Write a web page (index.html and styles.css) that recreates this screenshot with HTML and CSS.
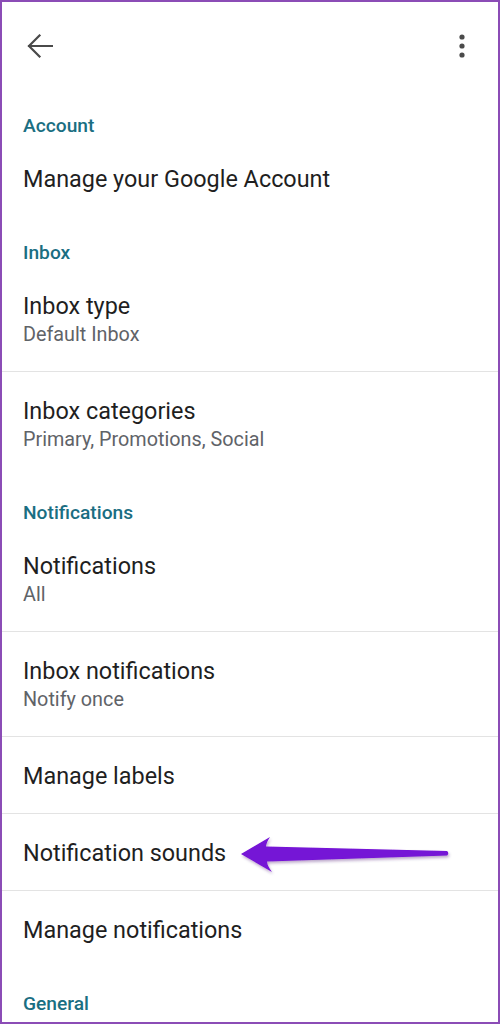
FILE: index.html
```html
<!DOCTYPE html>
<html>
<head>
<meta charset="utf-8">
<link rel="stylesheet" href="styles.css">
</head>
<body>
<div class="frame">
  <div class="topbar">
    <svg class="back" width="26" height="24" viewBox="0 0 26 24"><path d="M2 12H25M12.5 1.5L2 12L12.5 22.5" fill="none" stroke="#4a4a4a" stroke-width="2.2" stroke-linecap="square"/></svg>
    <svg class="more" width="6" height="24" viewBox="0 0 6 24"><circle cx="3" cy="3" r="2.6" fill="#4a4a4a"/><circle cx="3" cy="12" r="2.6" fill="#4a4a4a"/><circle cx="3" cy="21" r="2.6" fill="#4a4a4a"/></svg>
  </div>
  <div class="section">
    <div class="header">Account</div>
    <div class="item"><div class="title">Manage your Google Account</div></div>
  </div>
  <div class="section">
    <div class="header">Inbox</div>
    <div class="item"><div class="title">Inbox type</div><div class="sub">Default Inbox</div></div>
    <div class="item"><div class="title">Inbox categories</div><div class="sub">Primary, Promotions, Social</div></div>
  </div>
  <div class="section">
    <div class="header">Notifications</div>
    <div class="item"><div class="title">Notifications</div><div class="sub">All</div></div>
    <div class="item"><div class="title">Inbox notifications</div><div class="sub">Notify once</div></div>
    <div class="item"><div class="title">Manage labels</div></div>
    <div class="item"><div class="title">Notification sounds</div></div>
    <div class="item"><div class="title">Manage notifications</div></div>
  </div>
  <div class="section">
    <div class="header">General</div>
  </div>
  <svg class="pointer" width="230" height="50" viewBox="0 0 230 50">
    <defs><filter id="sh" x="-10%" y="-30%" width="120%" height="160%"><feDropShadow dx="1" dy="2" stdDeviation="1.6" flood-color="#3a0a66" flood-opacity="0.35"/></filter></defs>
    <path filter="url(#sh)" fill="#7512d6" d="M10 26 L39 9 Q35 15 35 18.5 L216 23 Q218.5 25.2 216 27.5 L36 33.5 Q36 37.5 41 44 Z"/>
  </svg>
</div>
</body>
</html>
```
FILE: styles.css
```css
html, body {
  margin: 0;
  padding: 0;
  background: #ffffff;
}
.frame {
  position: relative;
  width: 500px;
  height: 1024px;
  box-sizing: border-box;
  border: 2px solid #8b4cb6;
  overflow: hidden;
  background: #ffffff;
  font-family: Roboto, "Noto Sans", sans-serif;
}
.topbar {
  height: 87px;
  display: flex;
  align-items: center;
  justify-content: space-between;
  padding: 0 33px 0 25px;
}
.back, .more {
  display: block;
}
.header {
  padding: 24px 20px 0 21px;
  height: 26px;
  line-height: 26px;
  font-size: 19.2px;
  font-weight: 500;
  color: #1a6e82;
}
.item {
  padding: 25px 20px 22px 21px;
}
.item + .item {
  border-top: 1px solid #e3e3e3;
  padding-top: 24px;
}
.title {
  font-size: 23.4px;
  line-height: 30px;
  color: #1f1f1f;
}
.sub {
  font-size: 19.8px;
  line-height: 28px;
  color: #5f6368;
}
.pointer {
  position: absolute;
  left: 229px;
  top: 826px;
}
```
